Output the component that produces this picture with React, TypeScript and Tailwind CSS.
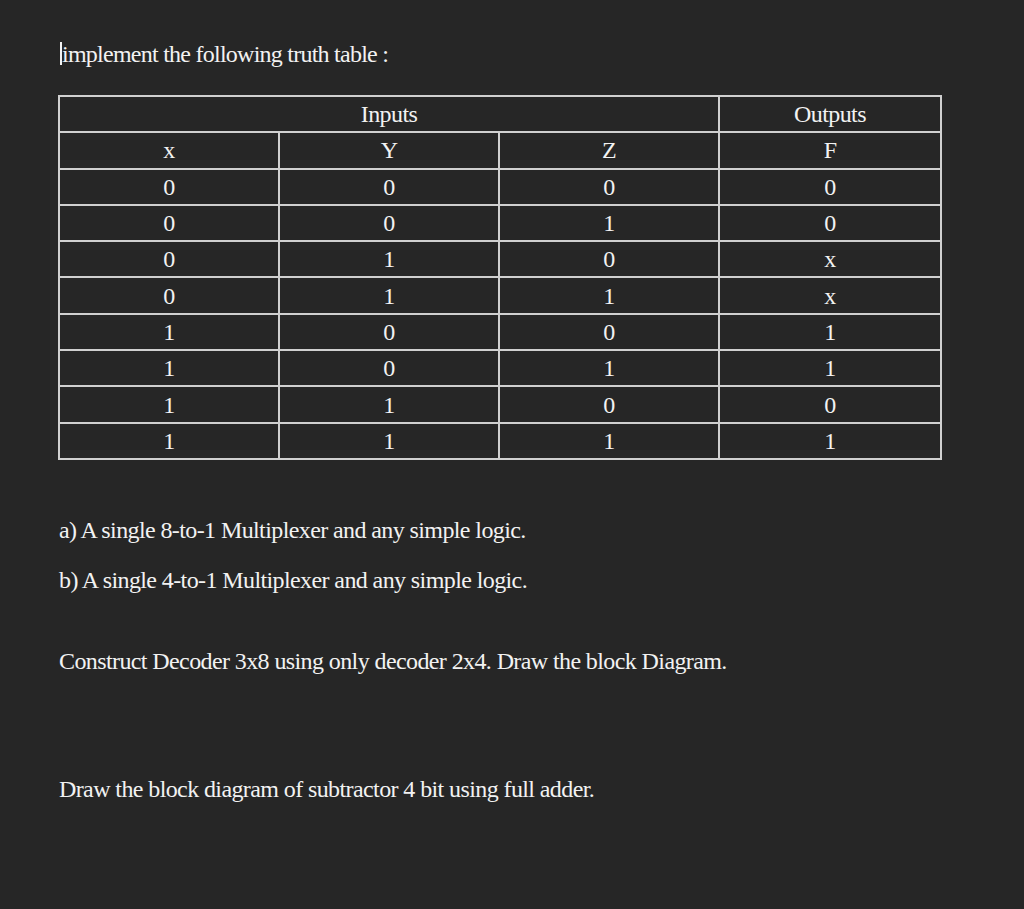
const rows: [string, string, string, string][] = [
  ['0', '0', '0', '0'],
  ['0', '0', '1', '0'],
  ['0', '1', '0', 'x'],
  ['0', '1', '1', 'x'],
  ['1', '0', '0', '1'],
  ['1', '0', '1', '1'],
  ['1', '1', '0', '0'],
  ['1', '1', '1', '1'],
];

function Cell({ children, span }: { children: React.ReactNode; span?: number }) {
  return (
    <td
      colSpan={span}
      className="border-2 border-[#d0d0d0] h-[36.3px] p-0 text-center align-middle leading-[24px]"
    >
      {children}
    </td>
  );
}

export default function App() {
  return (
    <div
      className="min-h-[909px] w-full bg-[#262626] text-[#f2f2f2] text-[24px] leading-[26px] tracking-[-0.6px] pt-[41px] pl-[59px]"
      style={{ fontFamily: '"Liberation Serif", "Times New Roman", serif' }}
    >
      <h1 className="font-normal flex items-start tracking-[-0.75px]">
        <span className="w-[2px] h-[23px] bg-[#f2f2f2] mt-[1px] ml-[1px]" />
        implement the following truth table :
      </h1>

      <table className="mt-[28px] ml-[-1px] border-collapse table-fixed w-[882px]">
        <colgroup>
          <col className="w-[220px]" />
          <col className="w-[220px]" />
          <col className="w-[220px]" />
          <col className="w-[222px]" />
        </colgroup>
        <tbody>
          <tr>
            <Cell span={3}>Inputs</Cell>
            <Cell>Outputs</Cell>
          </tr>
          <tr>
            <Cell>x</Cell>
            <Cell>Y</Cell>
            <Cell>Z</Cell>
            <Cell>F</Cell>
          </tr>
          {rows.map((r, i) => (
            <tr key={i}>
              {r.map((v, j) => (
                <Cell key={j}>{v}</Cell>
              ))}
            </tr>
          ))}
        </tbody>
      </table>

      <p className="mt-[57px]">a) A single 8-to-1 Multiplexer and any simple logic.</p>
      <p className="mt-[24px]">b) A single 4-to-1 Multiplexer and any simple logic.</p>
      <p className="mt-[55px]">Construct Decoder 3x8 using only decoder 2x4. Draw the block Diagram.</p>
      <p className="mt-[102px]">Draw the block diagram of subtractor 4 bit using full adder.</p>
    </div>
  );
}
